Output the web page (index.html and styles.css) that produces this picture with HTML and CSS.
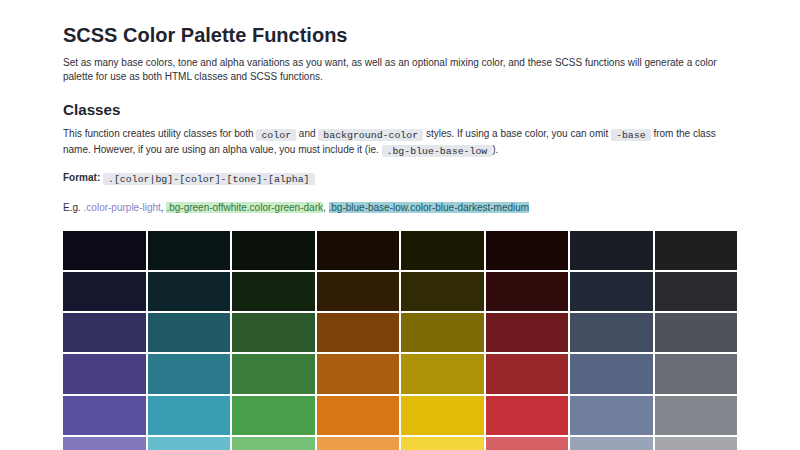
FILE: index.html
```html
<!DOCTYPE html>
<html>
<head>
<meta charset="utf-8">
<link rel="stylesheet" href="styles.css">
</head>
<body>
<main class="page">
  <h1 class="title">SCSS Color Palette Functions</h1>
  <p class="text intro">Set as many base colors, tone and alpha variations as you want, as well as an optional mixing color, and these SCSS functions will generate a color palette for use as both HTML classes and SCSS functions.</p>
  <h2 class="subtitle">Classes</h2>
  <p class="text desc">This function creates utility classes for both <code>color</code> and <code>background-color</code> styles. If using a base color, you can omit <code>-base</code> from the class name. However, if you are using an alpha value, you must include it (ie. <code>.bg-blue-base-low</code>).</p>
  <p class="text format"><strong>Format:</strong> <code>.[color|bg]-[color]-[tone]-[alpha]</code></p>
  <p class="text eg">E.g. <span class="ex-purple">.color-purple-light</span>, <span class="ex-green">.bg-green-offwhite.color-green-dark</span>, <span class="ex-blue">.bg-blue-base-low.color-blue-darkest-medium</span></p>
  <div class="palette">
    <div class="sw" style="background:#0c0c18"></div>
    <div class="sw" style="background:#081416"></div>
    <div class="sw" style="background:#0a1209"></div>
    <div class="sw" style="background:#170d02"></div>
    <div class="sw" style="background:#1b1802"></div>
    <div class="sw" style="background:#1b0606"></div>
    <div class="sw" style="background:#181d25"></div>
    <div class="sw" style="background:#1e1f21"></div>

    <div class="sw" style="background:#17162f"></div>
    <div class="sw" style="background:#0c242a"></div>
    <div class="sw" style="background:#12230f"></div>
    <div class="sw" style="background:#321d05"></div>
    <div class="sw" style="background:#302b04"></div>
    <div class="sw" style="background:#310b0c"></div>
    <div class="sw" style="background:#212835"></div>
    <div class="sw" style="background:#2a2b2e"></div>

    <div class="sw" style="background:#33305f"></div>
    <div class="sw" style="background:#1f5965"></div>
    <div class="sw" style="background:#2b592b"></div>
    <div class="sw" style="background:#7b4309"></div>
    <div class="sw" style="background:#7f6b04"></div>
    <div class="sw" style="background:#6e1a1e"></div>
    <div class="sw" style="background:#434d62"></div>
    <div class="sw" style="background:#4e5259"></div>

    <div class="sw" style="background:#473f82"></div>
    <div class="sw" style="background:#2b7b8c"></div>
    <div class="sw" style="background:#3b7e3b"></div>
    <div class="sw" style="background:#a95d0e"></div>
    <div class="sw" style="background:#ad9205"></div>
    <div class="sw" style="background:#98262b"></div>
    <div class="sw" style="background:#566581"></div>
    <div class="sw" style="background:#686c74"></div>

    <div class="sw" style="background:#5a50a2"></div>
    <div class="sw" style="background:#3a9db3"></div>
    <div class="sw" style="background:#4aa04a"></div>
    <div class="sw" style="background:#d77714"></div>
    <div class="sw" style="background:#e1bb08"></div>
    <div class="sw" style="background:#c33037"></div>
    <div class="sw" style="background:#6f7f9d"></div>
    <div class="sw" style="background:#82868d"></div>

    <div class="sw" style="background:#8179bb"></div>
    <div class="sw" style="background:#65bccc"></div>
    <div class="sw" style="background:#77c077"></div>
    <div class="sw" style="background:#ed9d47"></div>
    <div class="sw" style="background:#f5d53c"></div>
    <div class="sw" style="background:#d66166"></div>
    <div class="sw" style="background:#99a4b8"></div>
    <div class="sw" style="background:#a5a7ad"></div>
  </div>
</main>
</body>
</html>
```
FILE: styles.css
```css
html, body {
  margin: 0;
  padding: 0;
  background: #ffffff;
}
body {
  font-family: "Liberation Sans", Arial, sans-serif;
  color: #2e3038;
  font-size: 10px;
  line-height: 14px;
}
.page {
  width: 674px;
  margin: 0 auto;
  padding-top: 23px;
}
.title {
  font-size: 20px;
  line-height: 24px;
  font-weight: bold;
  color: #1f2430;
  margin: 0 0 9px 0;
}
.subtitle {
  font-size: 15.2px;
  line-height: 20px;
  font-weight: bold;
  color: #1f2430;
  margin: 16px 0 6px 0;
}
.text {
  margin: 0;
}
.desc {
  line-height: 15px;
}
.format {
  margin-top: 12px;
  line-height: 15px;
}
.eg {
  margin-top: 14px;
  line-height: 15px;
}
code {
  font-family: "Liberation Mono", "Courier New", monospace;
  font-size: 9.9px;
  background: #e4e7ec;
  border-radius: 2px;
  padding: 0.5px 5px;
  color: #2e3038;
}
.ex-purple {
  color: #8a82c4;
}
.ex-green {
  background: #c9ecc9;
  color: #357a35;
}
.ex-blue {
  background: #9ccfd8;
  color: #1f5563;
}
.palette {
  display: grid;
  grid-template-columns: repeat(8, 1fr);
  grid-auto-rows: 39.3px;
  gap: 2px;
  margin-top: 15.5px;
}
.sw {
  min-width: 0;
}
```
